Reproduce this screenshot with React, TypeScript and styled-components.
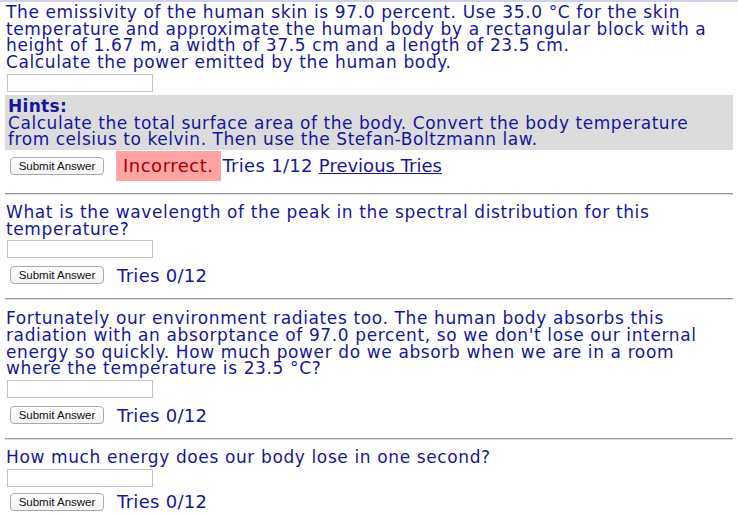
import styled, { createGlobalStyle } from 'styled-components'

const GlobalStyle = createGlobalStyle`
  body {
    margin: 0;
    background: #fff;
    font-family: "DejaVu Sans", Verdana, sans-serif;
  }
`

const Page = styled.main`
  width: 728px;
  padding: 0 5px 0 5px;
  border-top: 2px solid #cfd0ec;
  margin-right: 5px;
  color: #16169c;
`

const Part = styled.section<{ $top: number }>`
  padding-top: ${(p) => p.$top}px;
`

const Question = styled.p`
  margin: 0;
  padding-left: 1px;
  font-size: 17px;
  line-height: 16.7px;
  letter-spacing: 0.62px;
`

const Line = styled.span`
  display: block;
  white-space: nowrap;
`

const AnswerInput = styled.input`
  display: block;
  width: 146px;
  height: 18px;
  box-sizing: border-box;
  margin: 3px 0 0 2px;
  border: 1px solid #c4c4c4;
  background: #fff;
  padding: 0;
`

const Hints = styled.div`
  margin-top: 3px;
  background: #dcdcdc;
  padding: 3px 3px 2px 3px;
  font-size: 17px;
  line-height: 16.7px;
  letter-spacing: 0.55px;
`

const HintsLabel = styled.div`
  font-weight: bold;
  letter-spacing: 0.3px;
`

const ActionRow = styled.div<{ $top: number }>`
  display: flex;
  align-items: center;
  height: 30px;
  margin-top: ${(p) => p.$top}px;
  font-size: 18px;
  letter-spacing: 0.3px;
`

const SubmitButton = styled.button`
  margin-left: 5px;
  width: 94px;
  height: 18px;
  padding: 0;
  border: 1px solid #a9a9a9;
  border-radius: 4px;
  background: linear-gradient(#ffffff, #f2f2f2);
  font-family: "Liberation Sans", Arial, sans-serif;
  font-size: 11.5px;
  letter-spacing: 0;
  color: #111;
`

const Status = styled.span`
  margin-left: 12px;
  height: 30px;
  line-height: 30px;
  padding: 0 8px 0 7px;
  background: #ffa3a3;
  color: #a40000;
  letter-spacing: 0.5px;
`

const Tries = styled.span<{ $first?: boolean }>`
  margin-left: ${(p) => (p.$first ? 13 : 1)}px;
  white-space: pre;
`

const PrevLink = styled.a`
  color: #16169c;
  text-decoration: underline;
  letter-spacing: 0;
`

const Rule = styled.hr<{ $gap: number }>`
  margin: ${(p) => p.$gap}px 0 0 0;
  border: 0;
  border-top: 1px solid #9a9a9a;
  border-bottom: 1px solid #dedede;
  height: 0;
`

export default function App() {
  return (
    <>
      <GlobalStyle />
      <Page>
        <Part $top={2}>
          <Question>
            <Line>The emissivity of the human skin is 97.0 percent. Use 35.0 °C for the skin</Line>
            <Line>temperature and approximate the human body by a rectangular block with a</Line>
            <Line>height of 1.67 m, a width of 37.5 cm and a length of 23.5 cm.</Line>
            <Line>Calculate the power emitted by the human body.</Line>
          </Question>
          <AnswerInput />
          <Hints>
            <HintsLabel>Hints:</HintsLabel>
            <Line>Calculate the total surface area of the body. Convert the body temperature</Line>
            <Line>from celsius to kelvin. Then use the Stefan-Boltzmann law.</Line>
          </Hints>
          <ActionRow $top={1}>
            <SubmitButton>Submit Answer</SubmitButton>
            <Status>Incorrect.</Status>
            <Tries>
              Tries 1/12 <PrevLink href="#">Previous Tries</PrevLink>
            </Tries>
          </ActionRow>
        </Part>
        <Rule $gap={12} />
        <Part $top={9}>
          <Question>
            <Line>What is the wavelength of the peak in the spectral distribution for this</Line>
            <Line>temperature?</Line>
          </Question>
          <AnswerInput />
          <ActionRow $top={2}>
            <SubmitButton>Submit Answer</SubmitButton>
            <Tries $first>Tries 0/12</Tries>
          </ActionRow>
        </Part>
        <Rule $gap={8} />
        <Part $top={10}>
          <Question>
            <Line>Fortunately our environment radiates too. The human body absorbs this</Line>
            <Line>radiation with an absorptance of 97.0 percent, so we don't lose our internal</Line>
            <Line>energy so quickly. How much power do we absorb when we are in a room</Line>
            <Line>where the temperature is 23.5 °C?</Line>
          </Question>
          <AnswerInput />
          <ActionRow $top={2}>
            <SubmitButton>Submit Answer</SubmitButton>
            <Tries $first>Tries 0/12</Tries>
          </ActionRow>
        </Part>
        <Rule $gap={8} />
        <Part $top={9}>
          <Question>
            <Line>How much energy does our body lose in one second?</Line>
          </Question>
          <AnswerInput />
          <ActionRow $top={0}>
            <SubmitButton>Submit Answer</SubmitButton>
            <Tries $first>Tries 0/12</Tries>
          </ActionRow>
        </Part>
      </Page>
    </>
  )
}
